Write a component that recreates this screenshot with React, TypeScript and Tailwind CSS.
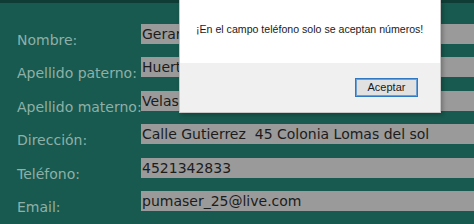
import React from "react";

const fields = [
  { label: "Nombre:", value: "Gerardo" },
  { label: "Apellido paterno:", value: "Huerta" },
  { label: "Apellido materno:", value: "Velasquez" },
  { label: "Dirección:", value: "Calle Gutierrez\u00a0 45 Colonia Lomas del sol" },
  { label: "Teléfono:", value: "4521342833" },
  { label: "Email:", value: "pumaser_25@live.com" },
];

const App = () => {
  return (
    <div className="relative w-[474px] h-[224px] overflow-hidden bg-[#185a4f] font-['DejaVu_Sans',sans-serif]">
      <div className="h-[3px] bg-[#0f3d36]" />
      <div className="pt-[21px] flex flex-col">
        {fields.map((f) => (
          <div key={f.label} className="h-[33.4px] flex items-start">
            <div className="relative z-10 w-[141px] shrink-0 pl-[17px] pt-[6px] text-[14px] leading-[20px] text-[#8fb0a8] whitespace-nowrap">
              {f.label}
            </div>
            <div className="flex-1 h-[20px] bg-[#9a9a9a] pl-[1px] text-[14px] leading-[20px] text-[#1c1c1c] whitespace-nowrap overflow-hidden">
              {f.value}
            </div>
          </div>
        ))}
      </div>

      <div className="absolute z-20 left-[179px] top-0 w-[262px] h-[113px] bg-white border-l border-r border-b border-[#c8c8c8] shadow-[2px_2px_4px_rgba(0,0,0,0.25)] flex flex-col font-['Liberation_Sans',sans-serif]">
        <div className="h-[63px] pl-[16px] pt-[22px] text-[10.6px] text-[#1a1a1a] whitespace-nowrap">
          ¡En el campo teléfono solo se aceptan números!
        </div>
        <div className="flex-1 bg-[#f0f0f0] flex justify-end items-start pt-[15px] pr-[22px]">
          <button className="w-[63px] h-[19px] bg-[#e1e1e1] border border-[#2e78c4] outline outline-1 outline-[#6ea0d4] -outline-offset-2 text-[11px] text-[#1a1a1a] leading-none">
            Aceptar
          </button>
        </div>
      </div>
    </div>
  );
};

export default App;
